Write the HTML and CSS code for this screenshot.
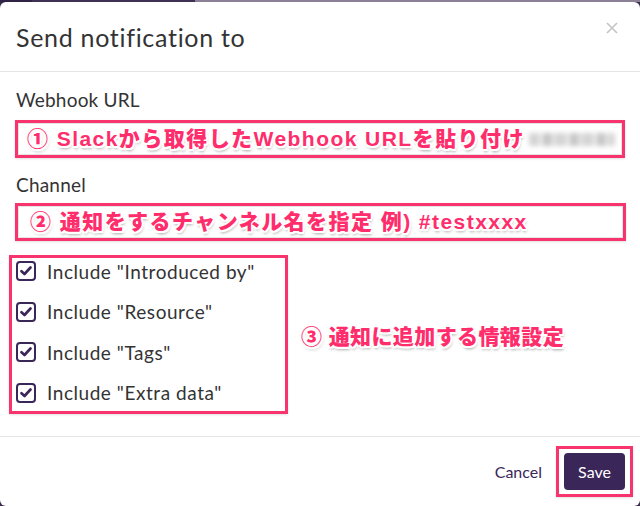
FILE: index.html
```html
<!DOCTYPE html>
<html lang="ja">
<head>
<meta charset="utf-8">
<link rel="stylesheet" href="styles.css">
</head>
<body>
<div class="backdrop-strip"></div>
<div class="modal">
  <div class="modal-header">
    <h1 class="title">Send notification to</h1>
    <svg class="close" width="12" height="12" viewBox="0 0 12 12"><path d="M1 1L11 11M11 1L1 11" stroke="#c4c4c4" stroke-width="1.6" fill="none"/></svg>
  </div>
  <div class="modal-body">
    <div class="label label-first">Webhook URL</div>
    <div class="annot-box box-url">
      <span class="annot annot-wide">① Slackから取得したWebhook URLを貼り付け</span>
      <span class="blurred"></span>
    </div>
    <div class="label label-second">Channel</div>
    <div class="annot-box box-channel">
      <span class="annot annot-wide">② 通知をするチャンネル名を指定 例) #testxxxx</span>
    </div>
    <div class="options-row">
      <div class="check-group">
        <label class="check-row"><span class="checkbox"><svg width="12" height="10" viewBox="0 0 12 10"><path d="M1.5 5.2L4.5 8L10.5 1.5" stroke="#3b2659" stroke-width="2.6" fill="none" stroke-linecap="round" stroke-linejoin="round"/></svg></span><span class="check-text">Include "Introduced by"</span></label>
        <label class="check-row"><span class="checkbox"><svg width="12" height="10" viewBox="0 0 12 10"><path d="M1.5 5.2L4.5 8L10.5 1.5" stroke="#3b2659" stroke-width="2.6" fill="none" stroke-linecap="round" stroke-linejoin="round"/></svg></span><span class="check-text">Include "Resource"</span></label>
        <label class="check-row"><span class="checkbox"><svg width="12" height="10" viewBox="0 0 12 10"><path d="M1.5 5.2L4.5 8L10.5 1.5" stroke="#3b2659" stroke-width="2.6" fill="none" stroke-linecap="round" stroke-linejoin="round"/></svg></span><span class="check-text">Include "Tags"</span></label>
        <label class="check-row"><span class="checkbox"><svg width="12" height="10" viewBox="0 0 12 10"><path d="M1.5 5.2L4.5 8L10.5 1.5" stroke="#3b2659" stroke-width="2.6" fill="none" stroke-linecap="round" stroke-linejoin="round"/></svg></span><span class="check-text">Include "Extra data"</span></label>
      </div>
      <span class="annot annot-three">③ 通知に追加する情報設定</span>
    </div>
  </div>
  <div class="modal-footer">
    <span class="cancel">Cancel</span>
    <div class="save-frame"><button class="save">Save</button></div>
  </div>
</div>
</body>
</html>
```

FILE: styles.css
```css
html, body {
  margin: 0;
  padding: 0;
}
body {
  width: 640px;
  height: 506px;
  overflow: hidden;
  background: #3a2d50;
  font-family: Lato, "Noto Sans", "Noto Sans CJK JP", sans-serif;
  color: #333;
}
.backdrop-strip {
  height: 2px;
  background: linear-gradient(to right, #2e2345 0, #2e2345 32px, #3e3156 32px, #3e3156 195px, #8b8196 195px, #8b8196 100%);
}
.modal {
  background: #fff;
  height: 504px;
  border-radius: 6px;
  display: flex;
  flex-direction: column;
}
.modal-header {
  height: 69px;
  border-bottom: 1px solid #e5e5e5;
  display: flex;
  align-items: center;
  justify-content: space-between;
  padding: 0 22px 0 16px;
}
.title {
  margin: 0;
  font-size: 25px;
  font-weight: 400;
  color: #333;
  letter-spacing: 0.7px;
}
.close {
  margin-top: -17px;
}
.modal-body {
  padding: 0 16px 22px 16px;
  display: flex;
  flex-direction: column;
}
.label {
  font-size: 19px;
  line-height: 20px;
  color: #333;
  letter-spacing: 0.2px;
}
.label-first {
  margin-top: 18px;
}
.label-second {
  margin-top: 17px;
}
.annot-box {
  height: 38px;
  box-sizing: border-box;
  border: 3px solid #f8346f;
  box-shadow: 0 1px 2px rgba(0,0,0,0.12), inset 0 0 0 1px #e4e4e4;
  display: flex;
  align-items: center;
  margin-left: -1px;
}
.box-url {
  margin-top: 10px;
  width: 610px;
  padding-left: 9px;
}
.box-channel {
  margin-top: 8px;
  width: 611px;
  padding-left: 12px;
}
.annot {
  font-family: "Liberation Sans", "Noto Sans CJK JP", sans-serif;
  font-weight: 900;
  font-size: 21px;
  line-height: 24px;
  letter-spacing: 0.4px;
  color: #ff2d6c;
  white-space: nowrap;
  text-shadow:
    -1.5px -1.5px 0 #fff, 1.5px -1.5px 0 #fff, -1.5px 1.5px 0 #fff, 1.5px 1.5px 0 #fff,
    0 -2px 0 #fff, 0 2px 0 #fff, -2px 0 0 #fff, 2px 0 0 #fff,
    1px 3px 3px rgba(0,0,0,0.35);
}
.annot-wide {
  letter-spacing: 1.45px;
}
.blurred {
  margin-left: 4px;
  width: 86px;
  height: 13px;
  background: repeating-linear-gradient(to right, #d4d4d4 0, #d4d4d4 10px, #ececec 10px, #ececec 14px, #c6c6c6 14px, #c6c6c6 22px, #e2e2e2 22px, #e2e2e2 27px);
  filter: blur(2.5px);
}
.options-row {
  display: flex;
  align-items: center;
  margin-top: 14px;
}
.check-group {
  margin-left: -7px;
  width: 279px;
  height: 159px;
  box-sizing: border-box;
  border: 3px solid #f8346f;
  box-shadow: 0 1px 2px rgba(0,0,0,0.12);
  padding: 1px 0 0 4px;
  display: flex;
  flex-direction: column;
  gap: 16.5px;
}
.check-row {
  display: flex;
  align-items: center;
  height: 24px;
  gap: 11px;
}
.checkbox {
  width: 20px;
  height: 20px;
  box-sizing: border-box;
  border: 2px solid #3b2659;
  border-radius: 4px;
  display: flex;
  align-items: center;
  justify-content: center;
}
.check-text {
  font-size: 19px;
  color: #333;
  letter-spacing: 0.55px;
}
.annot-three {
  margin-left: 13px;
  margin-top: 5px;
}
.modal-footer {
  flex: 1;
  border-top: 1px solid #e5e5e5;
  display: flex;
  align-items: center;
  justify-content: flex-end;
  padding-right: 7px;
}
.cancel {
  font-size: 16px;
  color: #3b2659;
  margin-right: 14px;
}
.save-frame {
  border: 3px solid #f8346f;
  padding: 4px 5px;
  box-shadow: 0 1px 2px rgba(0,0,0,0.12);
  display: flex;
}
.save {
  width: 61px;
  height: 37px;
  border: none;
  border-radius: 4px;
  background: #3b2659;
  color: #fff;
  font-family: Lato, "Noto Sans", sans-serif;
  font-size: 16px;
  padding: 0;
}
```
